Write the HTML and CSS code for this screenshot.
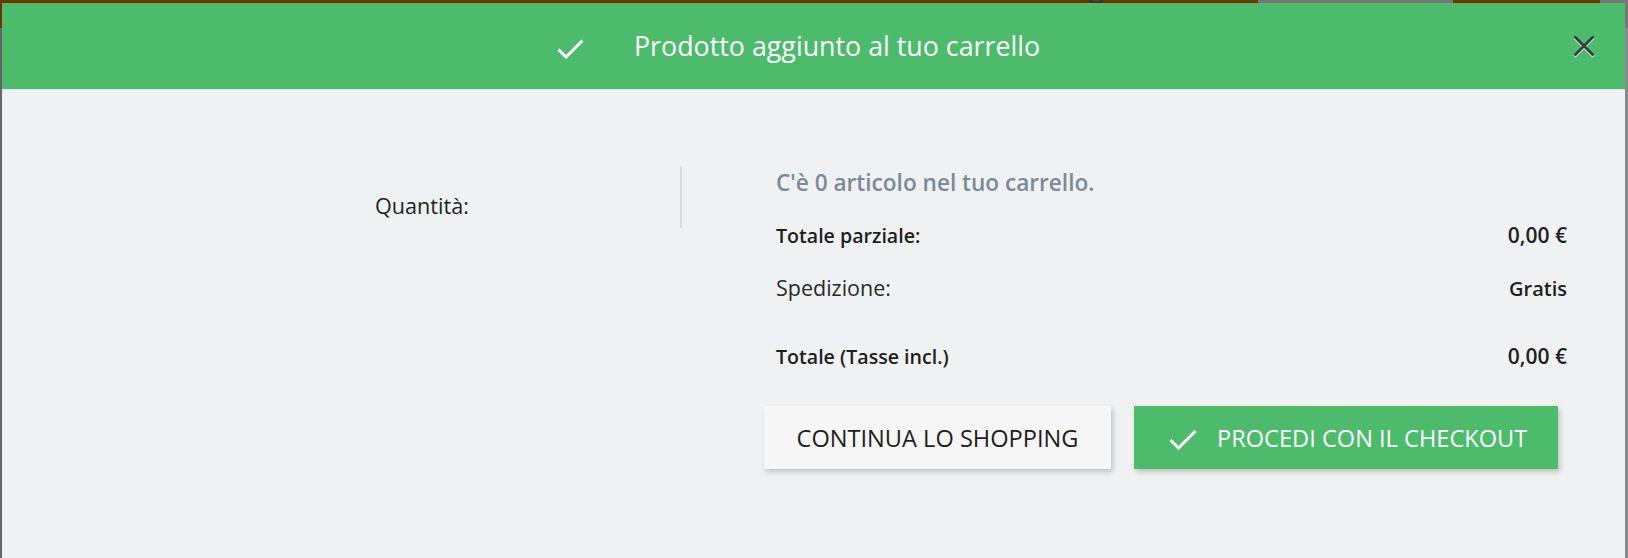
FILE: index.html
```html
<!DOCTYPE html>
<html lang="it">
<head>
<meta charset="utf-8">
<title>Carrello</title>
<link rel="stylesheet" href="styles.css">
</head>
<body>
<div class="page">
  <header class="site-header">
    <div class="nav-login"><span class="nav-icon"></span><span>Accedi</span></div>
    <div class="nav-cart"><span>Carrello (0)</span></div>
    <div class="nav-fill"></div>
    <div class="nav-edge"></div>
  </header>
  <div class="backdrop"></div>
</div>

<div class="modal">
  <div class="modal-header">
    <svg class="head-check" width="27" height="20" viewBox="0 0 27 20" aria-hidden="true">
      <polyline points="1.5,10.5 9,18 25.5,1.5" fill="none" stroke="#ffffff" stroke-width="3"/>
    </svg>
    <h4 class="modal-title">Prodotto aggiunto al tuo carrello</h4>
    <button class="close" type="button" aria-label="Chiudi">
      <svg width="22" height="22" viewBox="0 0 22 22" aria-hidden="true">
        <path d="M1.5 1.5 L20.5 20.5 M20.5 1.5 L1.5 20.5" fill="none" stroke="#363a46" stroke-width="2.8"/>
      </svg>
    </button>
  </div>
  <div class="modal-body">
    <div class="product-col">
      <p class="qty">Quantità:</p>
    </div>
    <div class="cart-col">
      <p class="cart-count">C'è 0 articolo nel tuo carrello.</p>
      <p class="line line-sub"><span class="label strong">Totale parziale:</span><span class="value">0,00&nbsp;€</span></p>
      <p class="line line-ship"><span class="label plain">Spedizione:</span><span class="value">Gratis</span></p>
      <p class="line line-total"><span class="label strong">Totale (Tasse incl.)</span><span class="value">0,00&nbsp;€</span></p>
      <div class="cart-actions">
        <button class="btn btn-secondary" type="button">CONTINUA LO SHOPPING</button>
        <button class="btn btn-primary" type="button">
          <svg class="btn-check" width="28" height="21" viewBox="0 0 28 21" aria-hidden="true">
            <polyline points="1.5,11 9.5,19 26.5,2" fill="none" stroke="#ffffff" stroke-width="3"/>
          </svg>
          <span>PROCEDI CON IL CHECKOUT</span>
        </button>
      </div>
    </div>
  </div>
</div>
</body>
</html>
```

FILE: styles.css
```css
html, body {
  margin: 0;
  padding: 0;
}

body {
  width: 1628px;
  height: 558px;
  overflow: hidden;
  position: relative;
  background: #666666;
  font-family: "Open Sans", "Noto Sans", "Liberation Sans", sans-serif;
  color: #232323;
}

/* page behind the modal */
.page {
  display: flex;
  flex-direction: column;
  height: 100%;
}

.site-header {
  margin-top: -30px;
  height: 58px;
  background: #6a3804;
  display: flex;
  justify-content: flex-end;
  align-items: stretch;
  font-size: 22px;
  line-height: 30px;
  color: #444444;
}

.nav-login {
  width: 173px;
  display: flex;
  gap: 12px;
}

.nav-login span {
  color: #555555;
}

.nav-icon {
  width: 18px;
  height: 18px;
  border: 2px solid #333333;
  border-radius: 50%;
  margin-top: 12px;
}

.nav-cart {
  width: 195px;
  background: #777777;
  padding-left: 40px;
  box-sizing: border-box;
}

.nav-cart span {
  color: #222222;
}

.nav-fill {
  width: 147px;
}

.nav-edge {
  width: 28px;
  background: #777777;
}

.backdrop {
  flex: 1;
  background: #666666;
  border-right: 3px solid #8a8a8a;
}

/* modal */
.modal {
  position: absolute;
  top: 3px;
  left: 2px;
  width: 1623px;
  height: 560px;
  background: #f0f1f3;
  display: flex;
  flex-direction: column;
}

.modal-header {
  height: 86px;
  background: #4cbb6c;
  border-bottom: 1px solid #e3e4e6;
  display: flex;
  align-items: center;
  padding-left: 555px;
  padding-right: 30px;
}

.head-check {
  display: block;
  margin-top: 6px;
}

.modal-title {
  margin: 0 0 0 50px;
  font-size: 26.8px;
  font-weight: 500;
  line-height: 34px;
  color: #ffffff;
}

.close {
  margin-left: auto;
  border: 0;
  background: transparent;
  padding: 0;
  width: 22px;
  height: 22px;
  cursor: pointer;
  filter: drop-shadow(0 1px 0 #ffffff);
}

.close svg {
  display: block;
}

.modal-body {
  display: grid;
  grid-template-columns: 680px 1fr;
  align-items: start;
  padding-top: 76px;
}

.product-col {
  height: 62px;
  box-sizing: border-box;
  border-right: 2px solid #dcdcdc;
  padding-left: 373px;
  padding-top: 26px;
}

.qty {
  margin: 0;
  font-size: 21.6px;
  line-height: 28px;
  color: #232323;
}

.cart-col {
  padding-left: 94px;
  padding-right: 58px;
}

.cart-count {
  margin: 4px 0 0;
  font-size: 22.6px;
  line-height: 26px;
  font-weight: 600;
  color: #7a8b97;
}

.line {
  margin: 0;
  display: flex;
  justify-content: space-between;
  align-items: baseline;
  height: 24px;
  line-height: 24px;
  color: #1e1e1e;
}

.line-sub { margin-top: 27px; }
.line-ship { margin-top: 29px; }
.line-total { margin-top: 44px; }

.label {
  font-size: 19.6px;
}

.label.plain {
  font-size: 21.5px;
  font-weight: 400;
  color: #2a2a2a;
}

.strong {
  font-weight: 600;
}

.value {
  font-size: 21px;
  font-weight: 600;
}

.line-ship .value {
  font-size: 20px;
}

.cart-actions {
  margin: 38px 0 0 -12px;
  display: flex;
  gap: 23px;
}

.btn {
  height: 63px;
  border: 0;
  font-family: inherit;
  font-size: 23.6px;
  font-weight: 400;
  display: flex;
  align-items: center;
  box-shadow: 2px 3px 5px rgba(0, 0, 0, 0.2);
  cursor: pointer;
}

.btn-secondary {
  width: 347px;
  justify-content: center;
  background: #f6f6f6;
  color: #1e1e1e;
}

.btn-primary {
  width: 424px;
  padding-left: 35px;
  gap: 20px;
  background: #4cbb6c;
  color: #ffffff;
}

.btn-check {
  display: block;
  margin-top: 3px;
}
```
